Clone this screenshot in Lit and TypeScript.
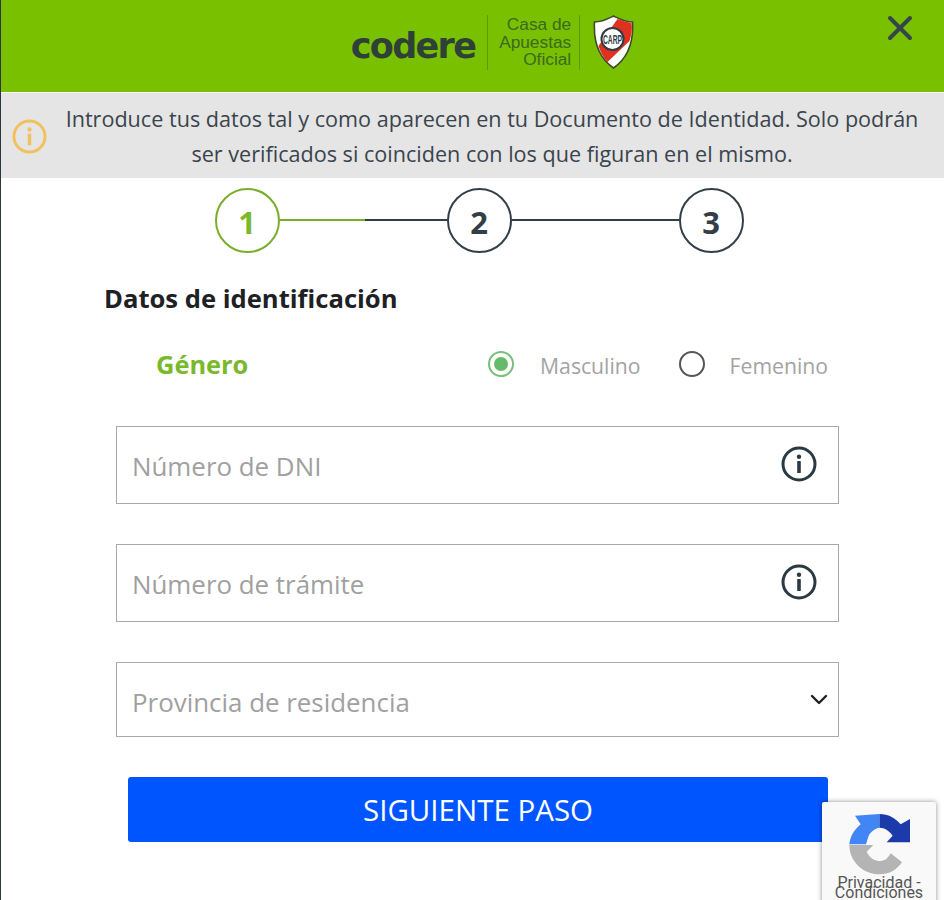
import { LitElement, css, html, svg } from "lit"
import { customElement } from "lit/decorators.js"

const infoIcon = (color: string, size: number) => html`
  <svg width=${size} height=${size} viewBox="0 0 36 36" fill="none">
    <circle cx="18" cy="18" r="16" stroke=${color} stroke-width="3"></circle>
    <circle cx="18" cy="10.8" r="2.2" fill=${color}></circle>
    <rect x="16.2" y="15" width="3.6" height="12" rx="0.6" fill=${color}></rect>
  </svg>
`

const shield = svg`
  <path d="M2 7 C10 7 15 4 21 1 C27 4 32 7 40 7 C41 24 37 42 21 53 C5 42 1 24 2 7Z" fill="#fff" stroke="#3f4a2a" stroke-width="1.6"/>
  <path d="M25 4 C30 6 35 7 39 8 C40 13 39 20 37 26 L15 47 C11 43 8 37 6 31Z" fill="#e0301f"/>
  <circle cx="20" cy="24" r="11" fill="#fff" stroke="#2e3a44" stroke-width="2"/>
`

@customElement("app-root")
export class AppRoot extends LitElement {
  static styles = css`
    :host {
      display: block;
      height: 900px;
      overflow: hidden;
      background: #fff;
      border-left: 1px solid #2c3640;
      box-sizing: border-box;
      font-family: "Open Sans", "Noto Sans", sans-serif;
      color: #333f48;
      position: relative;
    }

    .header {
      height: 92px;
      background: #79c000;
      display: flex;
      justify-content: center;
      align-items: center;
      position: relative;
      gap: 12px;
      padding-left: 41px;
      box-sizing: border-box;
    }
    .wordmark {
      font-family: "DejaVu Sans", sans-serif;
      font-size: 35px;
      font-weight: 700;
      letter-spacing: -1.7px;
      color: #2f4038;
      line-height: 1;
    }
    .official {
      border-left: 1px solid #5f9a0d;
      border-right: 1px solid #5f9a0d;
      height: 55px;
      width: 93px;
      box-sizing: border-box;
      padding-right: 8px;
      display: flex;
      flex-direction: column;
      justify-content: center;
      align-items: flex-end;
      font-family: "Liberation Sans", sans-serif;
      font-size: 17.3px;
      line-height: 17.5px;
      color: #3b6a1d;
      text-align: right;
      margin-top: -7px;
    }
    .crest {
      margin-top: -8px;
    }
    .crest text {
      font-family: "Liberation Sans", sans-serif;
      font-size: 13px;
      font-weight: 700;
      fill: #2e3a44;
    }
    .close {
      position: absolute;
      top: 15px;
      right: 31px;
    }

    .banner {
      height: 85px;
      margin-top: 1px;
      background: #e5e5e5;
      display: flex;
      align-items: center;
      padding-left: 11px;
      padding-right: 20px;
      box-sizing: border-box;
      gap: 13px;
    }
    .banner svg {
      flex: none;
      margin-top: 2px;
    }
    .banner p {
      margin: 0;
      flex: 1;
      text-align: center;
      font-size: 21.6px;
      line-height: 35px;
      color: #3a444c;
    }

    .stepper {
      display: flex;
      align-items: center;
      justify-content: center;
      margin-top: 10px;
      padding-left: 13px;
    }
    .step {
      width: 65px;
      height: 65px;
      flex: none;
      box-sizing: border-box;
      border: 2.5px solid #333f48;
      border-radius: 50%;
      display: flex;
      align-items: center;
      justify-content: center;
      font-size: 31px;
      font-weight: 700;
      color: #333f48;
      padding-top: 3px;
    }
    .step.active {
      border-color: #79ad2b;
      color: #79b92b;
    }
    .connector {
      width: 167px;
      height: 2px;
      margin-top: -2px;
      background: #333f48;
    }
    .connector.half {
      background: linear-gradient(to right, #79ad2b 51%, #333f48 51%);
    }

    .form {
      padding: 0 105px 0 115px;
    }
    h2 {
      margin: 27px 0 0 -12px;
      font-size: 25.6px;
      line-height: 38px;
      font-weight: 700;
      color: #1d2124;
    }
    .gender {
      display: flex;
      align-items: center;
      height: 44px;
      margin-top: 24px;
      padding-left: 40px;
    }
    .gender .label {
      font-size: 25.4px;
      font-weight: 700;
      color: #79b92b;
      flex: 1;
    }
    .radio {
      display: flex;
      align-items: center;
      gap: 25px;
      font-size: 21.2px;
      color: #a3a3a3;
      margin-right: 11px;
      padding-top: 2px;
    }
    .radio.on {
      gap: 26px;
    }
    .radio + .radio {
      margin-left: 27px;
    }
    .dot {
      width: 26px;
      height: 26px;
      box-sizing: border-box;
      border: 2.5px solid #555;
      border-radius: 50%;
      display: flex;
      align-items: center;
      justify-content: center;
      margin-top: -2px;
    }
    .radio.on .dot {
      border-color: #78c07a;
    }
    .radio.on .dot::after {
      content: "";
      width: 14px;
      height: 14px;
      border-radius: 50%;
      background: #66bb6a;
    }

    .field {
      height: 78px;
      border: 1px solid #a9a9a9;
      box-sizing: border-box;
      display: flex;
      align-items: center;
      justify-content: space-between;
      padding: 0 21px 0 15px;
      margin-top: 40px;
      font-size: 25.9px;
      color: #a0a0a0;
    }
    .field.select {
      height: 75px;
      padding-right: 8px;
    }
    .field span {
      padding-top: 1px;
    }
    .field.select span {
      padding-top: 5px;
    }
    .field svg {
      margin-top: -2px;
    }

    .next {
      display: block;
      width: 700px;
      height: 65px;
      margin: 40px 0 0 12px;
      border: none;
      border-radius: 3px;
      background: #0055ff;
      color: #fff;
      font-family: inherit;
      font-size: 29.5px;
      padding: 0;
    }

    .recaptcha {
      position: absolute;
      left: 821px;
      top: 802px;
      width: 114px;
      height: 110px;
      background: #f9f9f9;
      border-radius: 2px;
      box-shadow: 0 0 5px rgba(0, 0, 0, 0.45);
      display: flex;
      flex-direction: column;
      align-items: center;
      font-family: "Roboto", sans-serif;
      font-size: 16px;
      line-height: 9.5px;
      color: #555;
      text-align: center;
    }
    .recaptcha svg {
      margin-top: 3px;
      margin-left: 2px;
      flex: none;
    }
    .recaptcha .links {
      margin-top: -7px;
    }
  `

  render() {
    return html`
      <div class="header">
        <div class="wordmark">codere</div>
        <div class="official"><span>Casa de</span><span>Apuestas</span><span>Oficial</span></div>
        <svg class="crest" width="43" height="54" viewBox="0 0 42 54">
          ${shield}
          <text transform="translate(20 28.5) scale(0.52 1)" text-anchor="middle">CARP</text>
        </svg>
        <svg class="close" width="26" height="26" viewBox="0 0 26 26">
          <path d="M3 3 L23 23 M23 3 L3 23" stroke="#36454a" stroke-width="4" stroke-linecap="round"></path>
        </svg>
      </div>

      <div class="banner">
        ${infoIcon("#f0c15c", 35)}
        <p>Introduce tus datos tal y como aparecen en tu Documento de Identidad. Solo podrán ser verificados si coinciden con los que figuran en el mismo.</p>
      </div>

      <div class="stepper">
        <div class="step active">1</div>
        <div class="connector half"></div>
        <div class="step">2</div>
        <div class="connector"></div>
        <div class="step">3</div>
      </div>

      <div class="form">
        <h2>Datos de identificación</h2>
        <div class="gender">
          <div class="label">Género</div>
          <div class="radio on"><span class="dot"></span>Masculino</div>
          <div class="radio"><span class="dot"></span>Femenino</div>
        </div>
        <div class="field"><span>Número de DNI</span>${infoIcon("#2b3a42", 36)}</div>
        <div class="field"><span>Número de trámite</span>${infoIcon("#2b3a42", 36)}</div>
        <div class="field select">
          <span>Provincia de residencia</span>
          <svg width="22" height="22" viewBox="0 0 22 22" fill="none">
            <path d="M4 8 L11 15 L18 8" stroke="#1d2124" stroke-width="2.4" stroke-linecap="round" stroke-linejoin="round"></path>
          </svg>
        </div>
        <button class="next">SIGUIENTE PASO</button>
      </div>

      <div class="recaptcha">
        <svg width="80" height="80" viewBox="0 0 240 240">
          <path d="M118 27 C145 27 165 38 182 58 L210 42 L210 112 L140 112 L158 92 C148 78 135 68 118 68Z" fill="#1c3aa9"></path>
          <path d="M118 27 L118 68 C105 70 92 80 86 92 L78 118 L28 118 C30 95 42 75 62 58 L45 32Z" fill="#4285f4"></path>
          <path d="M28 120 L100 120 L80 140 C88 158 103 168 122 168 C135 168 145 158 152 145 L186 172 C170 195 148 208 118 208 C70 208 28 170 28 120Z" fill="#b4b4b4"></path>
        </svg>
        <div class="links">Privacidad -<br />Condiciones</div>
      </div>
    `
  }
}
